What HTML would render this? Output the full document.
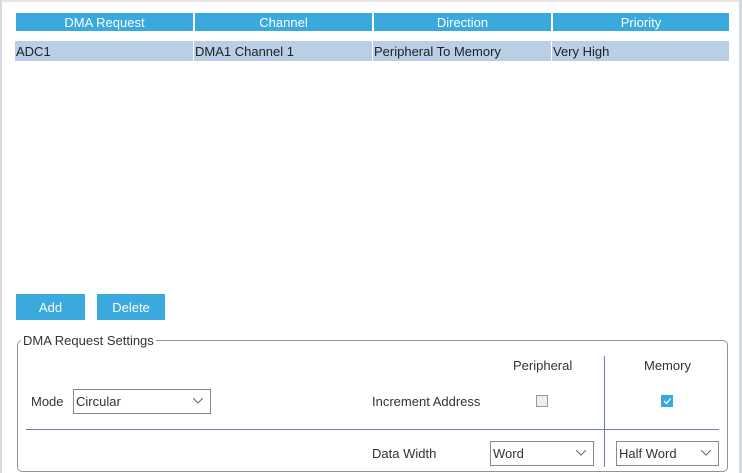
<!DOCTYPE html>
<html><head><style>
body{margin:0;width:742px;height:473px;background:#fff;position:relative;overflow:hidden;font-family:"Liberation Sans",Arial,sans-serif;font-size:13px;color:#333}
.a{position:absolute}
.h{background:#3aa9dd;color:#fff;top:13px;height:18px;line-height:20px;text-align:center}
.r{background:#b9cfe6;top:41px;height:20px;line-height:22px;padding-left:1px;color:#222}
.btn{background:#3aa9dd;color:#fff;top:294px;height:26px;line-height:27px;text-align:center}
.sel{border:1px solid #8a8a8a;height:22px;line-height:22px;padding-left:2px;box-sizing:border-box;background:#fff}
.sel svg{position:absolute;right:7px;top:8px}
</style></head><body>
<div class="a" style="left:0;top:0;width:742px;height:2px;background:#e4e6ea"></div>
<div class="a" style="left:0;top:0;width:2px;height:473px;background:#d6d9de"></div>
<div class="a" style="left:739px;top:0;width:3px;height:473px;background:#d6d9de"></div>
<div class="a h" style="left:16px;width:177px">DMA Request</div>
<div class="a h" style="left:195px;width:177px">Channel</div>
<div class="a h" style="left:374px;width:177px">Direction</div>
<div class="a h" style="left:553px;width:176px">Priority</div>
<div class="a r" style="left:15px;width:177px">ADC1</div>
<div class="a r" style="left:194px;width:177px">DMA1 Channel 1</div>
<div class="a r" style="left:373px;width:177px">Peripheral To Memory</div>
<div class="a r" style="left:552px;width:176px">Very High</div>
<div class="a btn" style="left:16px;width:69px">Add</div>
<div class="a btn" style="left:97px;width:68px">Delete</div>
<div class="a" style="left:17px;top:340px;width:709px;height:130px;border:1px solid #8f9399;border-radius:5px"></div>
<div class="a" style="left:21px;top:332px;background:#fff;padding:0 2px;line-height:17px">DMA Request Settings</div>
<div class="a" style="left:604px;top:356px;width:1px;height:111px;background:#6a7fb0"></div>
<div class="a" style="left:26px;top:429px;width:693px;height:1px;background:#6a7fb0"></div>
<div class="a" style="left:513px;top:358px">Peripheral</div>
<div class="a" style="left:644px;top:358px">Memory</div>
<div class="a" style="left:31px;top:394px">Mode</div>
<div class="a sel" style="left:73px;top:389px;width:138px;height:25px;line-height:23px">Circular<svg width="10" height="6"><path d="M0 0L5 5L10 0" fill="none" stroke="#666"/></svg></div>
<div class="a" style="left:372px;top:394px">Increment Address</div>
<div class="a" style="left:536px;top:395px;width:10px;height:10px;border:1px solid #999;background:#eee"></div>
<div class="a" style="left:661px;top:395px;width:12px;height:12px;background:#3aa9dd"><svg width="12" height="12"><path d="M3 6L5.5 8.5L9.5 3.5" fill="none" stroke="#fff" stroke-width="1.3"/></svg></div>
<div class="a" style="left:372px;top:446px">Data Width</div>
<div class="a sel" style="left:490px;top:441px;width:104px;height:25px;line-height:23px">Word<svg width="10" height="6"><path d="M0 0L5 5L10 0" fill="none" stroke="#666"/></svg></div>
<div class="a sel" style="left:616px;top:441px;width:103px;height:25px;line-height:23px">Half Word<svg width="10" height="6"><path d="M0 0L5 5L10 0" fill="none" stroke="#666"/></svg></div>
</body></html>
